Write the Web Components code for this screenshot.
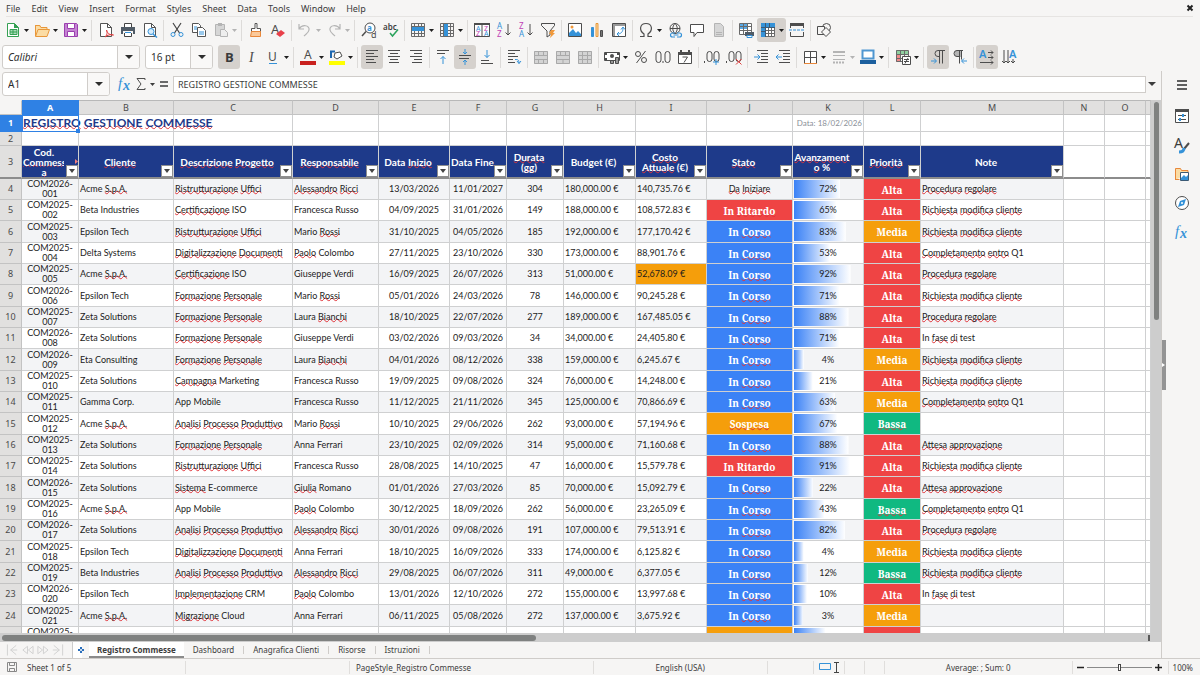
<!DOCTYPE html>
<html lang="it">
<head>
<meta charset="utf-8">
<title>Registro Commesse</title>
<style>
  html, body {
    margin: 0;
    height: 100%;
  }
  body {
    font-family: "Noto Sans", "Open Sans", sans-serif;
    font-size: 8px;
    color: #3c3c3c;
    background: #f6f5f4;
  }
</style>
</head>
<body>
<calc-window>
  <calc-menu slot="top"></calc-menu>
  <calc-toolbar slot="top" label="Standard" tools="new+ open+ save+ | pdf print preview | cut copy paste~ | brush clear | undo~ redo~ | find spell | row+ col+ | sort asc desc filter | image chart pivot | omega+ link comment header | area freeze*+ split | shapes"></calc-toolbar>
  <calc-toolbar slot="top" label="Formatting" tools="bold* italic under+ | fontcolor+ fill+ | left* center right | vtop vmid* vbot | wrap | merge1 merge2 merge3 | money+ percent number date | decadd decdel | indent outdent | borders+ style~ color+ | cond+ | ltr* rtl | horiz* vert">
    <calc-combo value="Calibri" label="Font name" style="width: 138px; font-style: italic"></calc-combo>
    <calc-combo value="16 pt" label="Font size" style="width: 68px"></calc-combo>
  </calc-toolbar>
  <formula-bar></formula-bar>
  <sheet-grid></sheet-grid>
  <sheet-tabs></sheet-tabs>
  <calc-sidebar slot="side"></calc-sidebar>
  <status-bar slot="bottom"></status-bar>
</calc-window>

<script>
// stroke helpers for the 16x16 icons
const p = (d, c = "#4d4d4d", w = 1, f = "none") => `<path d="${d}" fill="${f}" stroke="${c}" stroke-width="${w}"/>`;
const fillPath = (d, c) => `<path d="${d}" fill="${c}"/>`;
const t = (x, y, s, txt, c = "#4d4d4d", extra = "") => `<text x="${x}" y="${y}" font-size="${s}" fill="${c}" ${extra}>${txt}</text>`;
const BLUE = "#3592d8";
const GRAY = "#b4b4b4";
const hline = (a, b, y, c) => p(`M${a} ${y}H${b}`, c);
const table = (c = "#6a6a6a") => p("M1.5 1.5h13v13h-13zM1.5 4.5h13M1.5 8.5h13M1.5 11.5h13M4.5 1.5v13M8.5 1.5v13M11.5 1.5v13", c);
const mergeIcon = (d) => fillPath("M1 2h14v13H1z", "#d4d4d4") + p("M1.5 2.5h13v12h-13zM1.5 6.5h13M1.5 10.5h13" + d, "#a9a9a9");

const ICONS = {
  new: p("M2.5 1.5h7l4 4v9h-11z", "#35a053", 1, "#fff") + fillPath("M9 1v5h5z", "#35a053") + p("M5 7.5h7v5H5zM5 10h7M8 7.5v5", "#35a053", 1, "#a9dcb8"),
  open: fillPath("M1 3h5l1 2h6v2H5L2 14H1z", "#e59a3a") + p("M1.5 14V3.5h4l1.5 2h6V7M1.5 14.5L4 7.5h11.5l-2.5 7z", "#e8973a", 1, "#fbdca4"),
  save: p("M1.5 1.5h12l1 1v12h-13z", "#9b3fae", 1, "#c583d3") + p("M4.5 1.5h7v5h-7zM4.5 9.5h7v5h-7z", "#9b3fae", 1, "#fff"),
  pdf: p("M2.5 1.5h7l4 4v9h-11z", "#555", 1, "#fff") + p("M9.5 1.5v4h4") + p("M7 15c3-3 2-5 1.500-7 1 4 4 5 7 5-3-1-6 0-8.500 2z", "#e03e3e"),
  print: p("M4.500 5V1.500h7V5M4.500 11v3.500h7V11", "#444", 1, "#fff") + fillPath("M1 5h14v7h-2V9H3v3H1z", "#505b66") + fillPath("M5 10h6v1H5z", BLUE),
  preview: p("M2.5 1.5h7l4 4v9h-11z", "#555", 1, "#fff") + p("M9.5 1.5v4h4") + `<circle cx="9" cy="9.500" r="3" fill="#d6ebfa" stroke="${BLUE}"/>` + p("M11 12l4 3.500", BLUE, 1.500),
  cut: p("M4 1l6.500 10M12 1L5.500 11", "#444", 1.200) + `<circle cx="4" cy="12.500" r="2" fill="none" stroke="${BLUE}"/><circle cx="12" cy="12.500" r="2" fill="none" stroke="${BLUE}"/>`,
  copy: p("M1.500 1.500h6l2 2v7h-8z", "#555", 1, "#fff") + p("M6.500 5.500h5l3 3v6h-8z", "#555", 1, "#fff") + p("M8 10h5M8 12h5M3 5h3M3 7h3", BLUE),
  paste: p("M2.500 2.500h9v11h-9z", GRAY, 1, "#d6d6d6") + fillPath("M5 1h4v3H5z", GRAY) + p("M7.500 7.500h4l3 3v4h-7z", GRAY, 1, "#eee"),
  brush: p("M7 1.500h2v5h3.500v3h-9v-3H7z", "#555", 1, "#fff") + p("M3.500 9.500h9v5h-10z", "#e8873a", 1, "#fbc99a"),
  clear: t(1, 12, 13, "A", "#4d4d4d") + fillPath("M6 12l5-4 4 3-5 4z", "#e8404a"),
  undo: p("M2 2v5h5M2 7c3-5 11-4 10 1-.5 3-3 4-5 6", GRAY, 1.200),
  redo: p("M14 2v5H9M14 7C11 2 3 3 4 8c.500 3 3 4 5 6", GRAY, 1.200),
  find: `<circle cx="9" cy="6" r="5" fill="#fff" stroke="#4d4d4d"/>` + p("M5 9.500L1 14", "#4d4d4d", 1.500) + t(6, 9, 8, "a", BLUE, 'font-weight="bold"') + t(10, 16, 9, "d"),
  spell: t(0, 8, 8, "abc", "#3d3d3d", 'font-weight="600"') + p("M7 11l2.500 3L15 7.500", "#2ba35c", 1.500),
  row: table() + fillPath("M2 5h12v4H2z", BLUE),
  col: table() + fillPath("M5 2h4v12H5z", BLUE),
  sort: p("M.5 1.500h15v13H.5zM8 1.500v13", "#4d4d4d", 1, "#fff") + fillPath("M0 1h16v2H0z", "#4d4d4d") + t(2, 9, 7, "A", BLUE) + t(2, 14, 7, "Z", "#c03fb5") + t(10, 9, 7, "Z", "#c03fb5") + t(10, 14, 7, "A", BLUE),
  asc: t(1, 7, 8, "A", BLUE) + t(1, 15, 8, "Z", "#c03fb5") + p("M12 2v11M9.500 10.500L12 13l2.500-2.500"),
  desc: t(1, 7, 8, "Z", "#c03fb5") + t(1, 15, 8, "A", BLUE) + p("M12 2v11M9.500 10.500L12 13l2.500-2.500"),
  filter: p("M1.500 1.500h13v2L10 9v4l-3 2V9L1.500 3.500z") + fillPath("M11 8h4l-2 3h2l-5 5 1-4H9z", "#f0983a"),
  image: p("M1.500 1.500h13v13h-13z", "#4d4d4d", 1, "#fff") + fillPath("M2 14v-3l4-4 3 4 2-2 3 3v2z", BLUE) + `<circle cx="5" cy="5" r="1.500" fill="#f0983a"/>`,
  chart: p("M2.500 5.500h2v9h-2z", BLUE, 1, BLUE) + p("M7 1.500h2v13H7z", "#e8973a", 1, "#fbdca4") + p("M11.500 8.500h2v6h-2z", "#4d4d4d", 1, "#777"),
  pivot: p("M1.500 1.500h13v13h-13z", "#4d4d4d", 1, "#fff") + fillPath("M2 2h12v2H2zM2 2h2v12H2z", "#9a9a9a") + p("M6 12c4 0 6-2 6-6M10 7.500L12 5l2 2.500M8 10l-2 2 2 2", BLUE),
  omega: p("M2 14.500h4V12C.5 8 2 1.500 8 1.500S15.500 8 10 12v2.500h4", "#4d4d4d", 1.200),
  link: `<circle cx="8" cy="6.500" r="5" fill="none" stroke="#4d4d4d"/>` + p("M3 6.500h10M8 1.500c-3 3-3 7 0 10M8 1.500c3 3 3 7 0 10") + p("M8 11H5.500a1.500 1.500 0 0 0 0 4H8M10 11h2.500a1.500 1.500 0 0 1 0 4H10M6.500 13h5", BLUE, 1.200),
  comment: p("M1.500 2.500h13v8H8l-3 4v-4H1.500z", "#4d4d4d", 1, "#fff"),
  header: p("M3.500 1.500h6l3 3v10h-9z", GRAY, 1, "#d6d6d6") + p("M5 10.500h6M5 12.500h6", GRAY),
  area: p("M1.500 1.500h12v11h-12z", "#6a6a6a", 1, "#fff") + fillPath("M2 2h8v5H2z", "#5aa9e4") + p("M1.500 4.500h12M1.500 8.500h12M5.500 1.500v11M9.500 1.500v11", "#6a6a6a") + fillPath("M7 10h9v4H7z", "#505b66") + p("M9 13.500h5v2H9z", BLUE, 1, "#fff"),
  freeze: p("M1.500 1.500h13v13h-13z", "#6a6a6a", 1, "#fff") + p("M5 8.500h9M5 11.500h9M8.500 5v9M11.500 5v9", "#6a6a6a") + fillPath("M1 1h14v4H1zM1 1h4v14H1z", "#3592d8") + p("M5.500 1v14M1 5.500h14M9.500 1v4M1 9.500h4", "#3c5a75"),
  split: p("M1.500 6V2.500h13V6M1.500 10v4.500h13V10", "#4d4d4d", 1) + fillPath("M1 1h14v3H1z", "#4d4d4d") + `<path d="M0 8h16" stroke="${BLUE}" stroke-dasharray="3 1"/>`,
  shapes: `<circle cx="10.500" cy="5.500" r="4" fill="#f6f5f4" stroke="#4d4d4d"/>` + p("M1.500 4.500h7v8h-7z", "#4d4d4d", 1, "#f6f5f4") + p("M10 5.500l4.500 4.500-4.500 4.500L5.500 10z", "#4d4d4d", 1, "#f6f5f4"),

  bold: t(4, 13, 13, "B", "#3a3a3a", 'font-weight="bold" font-family="Open Sans"'),
  italic: t(6, 13, 14, "I", "#4d4d4d", 'font-style="italic" font-family="Liberation Serif"'),
  under: t(3, 12, 12, "U", "#4d4d4d") + hline(4, 12, 14.5, BLUE),
  fontcolor: t(4, 10, 12, "A") + fillPath("M0 12h16v4H0z", "#c9211e"),
  fill: p("M6 4l5-1 2 4-5 3-3-2z", "#4d4d4d", 1, "#fff") + p("M2 9V2.500h4", "#1d67b0", 2) + fillPath("M0 12h16v4H0z", "#ff0"),
  left: hline(2, 14, 1.5) + hline(2, 10, 4.5) + hline(2, 14, 7.5) + hline(2, 10, 10.5) + hline(2, 12, 13.5),
  center: hline(2, 14, 1.5) + hline(4, 12, 4.5) + hline(2, 14, 7.5) + hline(4, 12, 10.5) + hline(3, 13, 13.5),
  right: hline(2, 14, 1.5) + hline(6, 14, 4.5) + hline(2, 14, 7.5) + hline(6, 14, 10.5) + hline(4, 14, 13.5),
  vtop: hline(2, 14, 1.5) + hline(2, 10, 4.5) + p("M8 15V7.500M5.500 10L8 7.500l2.500 2.500", BLUE),
  vmid: hline(2, 14, 6.5) + hline(2, 12, 9.5) + p("M8 0v5M6 3l2 2 2-2M8 16v-5M6 13l2-2 2 2", BLUE),
  vbot: hline(2, 10, 11.5) + hline(2, 14, 14.5) + p("M8 1v7.500M5.500 6L8 8.500 10.500 6", BLUE),
  wrap: hline(2, 14, 1.5) + hline(2, 9, 4.5) + hline(2, 12, 7.5) + hline(2, 7, 10.5) + hline(2, 9, 13.5) + p("M9 10.500c3 0 4 0 4 4M11 12l2 2.500 2-2.500", BLUE),
  merge1: mergeIcon("M5.500 2v4M10.500 2v4M5.500 10v4M10.500 10v4"),
  merge2: mergeIcon("M5.500 2v4M10.500 2v4M8 10v4"),
  merge3: mergeIcon("M5.500 2v12M10.500 2v12"),
  money: p("M.5 3.500h15v8H.5z", "#4d4d4d", 1, "#fff") + fillPath("M1 4h2v2H1zM13 4h2v2h-2zM1 9h2v2H1z", "#4d4d4d") + `<circle cx="8" cy="7" r="2" fill="#4d4d4d"/>` + p("M6.500 11.500h3v3h-3zM11.500 8.500h3v6h-3z", "#4d4d4d", 1, "#999"),
  percent: `<circle cx="5" cy="5" r="2.500" fill="none" stroke="#4d4d4d"/><circle cx="11" cy="11" r="2.500" fill="none" stroke="#4d4d4d"/>` + p("M12.500 2L3.500 14"),
  number: `<rect x="1" y="2.500" width="5" height="11" rx="2.500" fill="none" stroke="#4d4d4d"/><rect x="10" y="2.500" width="5" height="11" rx="2.500" fill="none" stroke="#4d4d4d"/>` + fillPath("M7.500 12h1v2h-1z", "#4d4d4d"),
  date: p("M1.500 3.500h13v11h-13z", "#4d4d4d", 1, "#fff") + fillPath("M1 3h14v3H1zM3 1h2v3H3zM11 1h2v3h-2z", "#4d4d4d") + p("M5.500 8h5L7 13.500"),
  decadd: fillPath("M0 12h1v2H0z", "#4d4d4d") + `<rect x="3" y="2.500" width="5" height="10" rx="2.500" fill="none" stroke="#4d4d4d"/><rect x="10" y="2.500" width="5" height="10" rx="2.500" fill="none" stroke="#4d4d4d"/>` + p("M12 10v6M9 13h6", BLUE),
  decdel: fillPath("M0 12h1v2H0z", "#4d4d4d") + `<rect x="3" y="2.500" width="5" height="10" rx="2.500" fill="none" stroke="#4d4d4d"/><rect x="10" y="2.500" width="5" height="10" rx="2.500" fill="none" stroke="#4d4d4d"/>` + p("M10 10l5.500 5.500M15.500 10L10 15.500", "#e03e3e"),
  indent: hline(4, 15, 1.5) + hline(8, 15, 4.5) + hline(8, 15, 7.5) + hline(8, 15, 10.5) + hline(4, 15, 13.5) + p("M1 8h6M4.500 5.500L7 8l-2.500 2.500", BLUE),
  outdent: hline(4, 15, 1.5) + hline(8, 15, 4.5) + hline(8, 15, 7.5) + hline(8, 15, 10.5) + hline(4, 15, 13.5) + p("M7 8H1M3.500 5.500L1 8l2.500 2.500", BLUE),
  borders: p("M2.500 14V2.500h12V14M8.500 2.500V14M2.500 8.500h12", "#4d4d4d", 1, "#fff") + hline(2, 15, 14.5, "#e8873a"),
  style: p("M2 2.500h12M2 3.500h12M2 6.500h12M2 10.500h12", GRAY) + `<path d="M2 13.500h12" stroke="${GRAY}" stroke-dasharray="2 1" stroke-width="2"/>`,
  color: p("M2.500 1.500h11v8h-11z", "#4f97d1", 2, "#fff") + fillPath("M0 11h16v4H0z", "#1c5f9e"),
  cond: fillPath("M1 1h12v4H1z", "#8fd09f") + fillPath("M1 5h5v8H1z", "#f08a8a") + p("M1.500 1.500h12v11h-12zM1.500 5.500h12M1.500 9.500h12M5.500 1.500v11M9.500 1.500v11", "#6a6a6a") + p("M7.500 7.500h8v8h-8z", "#4d4d4d", 1, "#fff") + p("M9 10.500h5M9 12.500h5M13 9l-3 5.500"),
  ltr: p("M15 1.500H8a3 3 0 0 0 0 6h1M9.500 1.500v13M12.500 1.500v13") + p("M1 12h5M4 9.500L6.500 12 4 14.500", BLUE),
  rtl: fillPath("M6 1h4v7H6C1 8 1 1 6 1z", "#b4b4b4") + p("M11 1.500H5a3 3 0 0 0 0 6h2M7.500 1.500v13M9.500 1.500v9") + p("M15 12h-5M12 9.500L9.500 12l2.500 2.500", BLUE),
  horiz: t(0, 9, 11, "A", BLUE, 'font-weight="600"') + p("M9 3.500h5M12 1.500l2 2-2 2M9 8.500h5M12 6.500l2 2-2 2M1 13.500h13M12 11.500l2 2-2 2"),
  vert: t(8, 9, 11, "A", BLUE, 'font-weight="600"') + p("M3 1v13M1 12l2 2 2-2M7 1v13M5 12l2 2 2-2M12 10v4M10 12l2 2 2-2"),

  fx: t(1, 12, 15, "f", BLUE, 'font-style="italic" font-family="Liberation Serif"') + t(6, 14, 14, "x", BLUE, 'font-style="italic" font-weight="bold" font-family="Liberation Serif"'),
  sum: p("M12 4V2.500H4l4 5.500-4 5.500h8V12", "#4d4d4d", 1),
  equals: p("M4 6h8M4 10h8", "#3d3d3d", 1.5),
  menu: p("M3 4h10M3 8h10M3 12h10", "#2e2e2e", 1.500),
  props: p("M1.500 1.500h13v13h-13z", "#4d4d4d", 1, "#fff") + fillPath("M1 1h14v3H1z", "#4d4d4d") + p("M4 7.500h8M4 11.500h8", "#4d4d4d") + p("M9 6v3M6 10v3", BLUE, 2),
  styles: t(0, 11, 14, "A", "#3d3d3d") + p("M15 6l-5 6", "#4d4d4d", 2) + p("M5 15c3 0 5-1 5-4", BLUE, 3),
  gallery: p("M1.500 14V2.500h5l1 2h6.500V7M1.500 13.500h4", "#e8873a", 1, "#fbdca4") + p("M6.500 6.500h8v8h-8z", "#3c5a75", 1, "#fff") + fillPath("M7 14v-2l3-3 2 2 2-2v5z", BLUE),
  navigator: `<circle cx="8" cy="8" r="6.500" fill="#fff" stroke="#4d4d4d"/>` + fillPath("M12 4L10 10l-6 2 2-6z", BLUE) + `<circle cx="8" cy="8" r="1" fill="#fff"/>`
};

const icon = (name, size = 16) => `<svg width="${size}" height="${size}" viewBox="0 0 16 16" aria-hidden="true">${ICONS[name]}</svg>`;
const ARROW = `<svg width="5" height="3" viewBox="0 0 5 3" aria-hidden="true"><path d="M0 0h5L2.500 3z" fill="currentColor"/></svg>`;
const BIG_ARROW = `<svg width="8" height="4" viewBox="0 0 8 4" aria-hidden="true"><path d="M0 0h8L4 4z" fill="currentColor"/></svg>`;

const RESET = `
  button {
    font: inherit;
    color: inherit;
    background: none;
    border: 0;
    padding: 0;
    margin: 0;
  }
  svg {
    display: block;
    overflow: visible;
  }
`;

class CalcWindow extends HTMLElement {
  constructor() {
    super();
    this.attachShadow({ mode: "open" });
    this.shadowRoot.innerHTML = `
      <style>
        :host {
          display: flex;
          flex-direction: column;
          height: 100vh;
          overflow: hidden;
        }
        .main {
          flex: 1;
          min-height: 0;
          display: flex;
        }
        .work {
          flex: 1;
          min-width: 0;
          display: flex;
          flex-direction: column;
        }
      </style>
      <slot name="top"></slot>
      <div class="main">
        <div class="work"><slot></slot></div>
        <slot name="side"></slot>
      </div>
      <slot name="bottom"></slot>
    `;
  }
}

class CalcMenu extends HTMLElement {
  constructor() {
    super();
    this.attachShadow({ mode: "open" });
    const items = ["File", "Edit", "View", "Insert", "Format", "Styles", "Sheet", "Data", "Tools", "Window", "Help"];
    this.shadowRoot.innerHTML = `
      <style>
        ${RESET}
        :host {
          display: block;
          font-size: 9px;
          padding: 0 7px 0 6px;
        }
        nav {
          display: flex;
          align-items: center;
          gap: 11px;
          height: 16px;
          border-bottom: 1px solid #e6e4e2;
        }
        .close {
          margin-left: auto;
        }
      </style>
      <nav>
        ${items.map((i) => `<button>${i}</button>`).join("")}
        <button class="close" aria-label="Close document">
          <svg width="6" height="6" viewBox="0 0 6 6"><path d="M.5 .5l5 5M5.500 .5l-5 5" stroke="#222" stroke-width="2"/></svg>
        </button>
      </nav>
    `;
  }
}

class CalcToolbar extends HTMLElement {
  constructor() {
    super();
    this.attachShadow({ mode: "open" });
  }

  // suffixes: "+" has a menu, "~" has a menu but is disabled, "*" is pressed
  connectedCallback() {
    const tools = this.getAttribute("tools").split(" ").map((tool) => {
      if (tool === "|") return `<span class="sep"></span>`;
      const name = tool.replace(/[+~*]/g, "");
      const menu = /[+~]/.test(tool);
      const off = tool.includes("~");
      const on = tool.includes("*");
      return `<span class="tool ${menu ? "drop" : ""} ${on ? "on" : ""} ${off ? "off" : ""}">
        <button aria-label="${name}" ${on ? 'aria-pressed="true"' : ""} ${off ? "disabled" : ""}>${icon(name)}</button>
        ${menu ? `<button class="more" aria-label="${name} options" ${off ? "disabled" : ""}>${ARROW}</button>` : ""}
      </span>`;
    });
    this.shadowRoot.innerHTML = `
      <style>
        ${RESET}
        :host {
          display: flex;
          align-items: center;
          height: 26px;
          padding: 0 0 1px 2px;
        }
        .tool {
          display: flex;
          height: 24px;
          border-radius: 3px;
        }
        .tool button {
          width: 22px;
          display: flex;
          align-items: center;
          justify-content: center;
        }
        .tool .more {
          width: 7px;
          color: #1e1e1e;
          justify-content: flex-start;
        }
        .off .more {
          color: #b4b4b4;
        }
        .on {
          background: #d5d1cd;
        }
        .sep {
          width: 5px;
          height: 21px;
          background: linear-gradient(#dddbd9, #dddbd9) 2px 0 / 1px 100% no-repeat;
        }
        .drop + .sep {
          width: 6px;
        }
        ::slotted(*) {
          margin-right: 5px;
        }
      </style>
      <slot></slot>
      ${tools.join("")}
    `;
    this.setAttribute("role", "toolbar");
    this.setAttribute("aria-label", this.getAttribute("label"));
  }
}

class CalcCombo extends HTMLElement {
  constructor() {
    super();
    this.attachShadow({ mode: "open" });
  }

  connectedCallback() {
    this.shadowRoot.innerHTML = `
      <style>
        ${RESET}
        :host {
          display: grid;
          grid-template-columns: 1fr 22px;
          box-sizing: border-box;
          height: 24px;
          border: 1px solid #d0cdca;
          border-radius: 3px;
          background: #fff;
          overflow: hidden;
          font-size: 10px;
          color: #2e2e2e;
        }
        select {
          grid-area: 1 / 1 / 2 / 3;
          appearance: none;
          font: inherit;
          color: inherit;
          border: 0;
          background: none;
          padding: 0 0 0 5px;
          margin: 0;
        }
        span {
          grid-area: 1 / 2;
          display: flex;
          align-items: center;
          justify-content: center;
          pointer-events: none;
          background: #f9f8f7;
          border-left: 1px solid #d0cdca;
        }
      </style>
      <select aria-label="${this.getAttribute("label")}"><option>${this.getAttribute("value")}</option></select>
      <span>${BIG_ARROW}</span>
    `;
  }
}

class FormulaBar extends HTMLElement {
  constructor() {
    super();
    this.attachShadow({ mode: "open" });
    this.shadowRoot.innerHTML = `
      <style>
        ${RESET}
        :host {
          display: flex;
          align-items: center;
          height: 27px;
          padding: 0 5px 3px 2px;
          box-sizing: border-box;
          min-height: 29px;
        }
        calc-combo {
          width: 108px;
          margin-right: 7px;
        }
        button {
          display: flex;
          align-items: center;
        }
        .arrow {
          margin: 0 1px 0 1px;
        }
        input {
          flex: 1;
          min-width: 0;
          box-sizing: border-box;
          height: 17px;
          margin: 0 2px 0 1px;
          padding: 0 4px;
          border: 1px solid #d0cdca;
          background: #fff;
          font: inherit;
          font-size: 9px;
          color: #3c3c3c;
        }
      </style>
      <calc-combo value="A1" label="Name box"></calc-combo>
      <button aria-label="Function wizard">${icon("fx")}</button>
      <button aria-label="Select function">${icon("sum")}</button>
      <button class="arrow" aria-label="Function list">${ARROW}</button>
      <button aria-label="Formula">${icon("equals")}</button>
      <input aria-label="Input line" value="REGISTRO GESTIONE COMMESSE">
      <button aria-label="Expand formula bar">${BIG_ARROW}</button>
    `;
  }
}

const COLS = [57, 95, 119, 86, 71, 57, 57, 72, 71, 86, 71, 57, 143, 41, 41];
const HEADS = ["Cod.<i class='cut'>Commess</i>a", "Cliente", "Descrizione Progetto", "Responsabile", "Data Inizio", "Data Fine", "Durata<br>(gg)", "Budget (€)", "Costo<br>Attuale (€)", "Stato", "Avanzament<br>o %", "Priorità", "Note"];

const RF = "Richiesta modifica cliente", PR = "Procedura regolare", CE = "Completamento entro Q1", AA = "Attesa approvazione";
const ROWS = [
  ["2026-001", "Acme S.p.A.", "Ristrutturazione Uffici", "Alessandro Ricci", "13/03/2026", "11/01/2027", 304, "180,000.00", "140,735.76", "Da Iniziare", 72, "Alta", PR],
  ["2025-002", "Beta Industries", "Certificazione ISO", "Francesca Russo", "04/09/2025", "31/01/2026", 149, "188,000.00", "108,572.83", "In Ritardo", 65, "Alta", RF],
  ["2025-003", "Epsilon Tech", "Ristrutturazione Uffici", "Mario Rossi", "31/10/2025", "04/05/2026", 185, "192,000.00", "177,170.42", "In Corso", 83, "Media", RF],
  ["2025-004", "Delta Systems", "Digitalizzazione Documenti", "Paolo Colombo", "27/11/2025", "23/10/2026", 330, "173,000.00", "88,901.76", "In Corso", 53, "Alta", CE],
  ["2025-005", "Acme S.p.A.", "Certificazione ISO", "Giuseppe Verdi", "16/09/2025", "26/07/2026", 313, "51,000.00", "52,678.09", "In Corso", 92, "Alta", PR],
  ["2026-006", "Epsilon Tech", "Formazione Personale", "Mario Rossi", "05/01/2026", "24/03/2026", 78, "146,000.00", "90,245.28", "In Corso", 71, "Alta", RF],
  ["2025-007", "Zeta Solutions", "Formazione Personale", "Laura Bianchi", "18/10/2025", "22/07/2026", 277, "189,000.00", "167,485.05", "In Corso", 88, "Alta", PR],
  ["2026-008", "Zeta Solutions", "Formazione Personale", "Giuseppe Verdi", "03/02/2026", "09/03/2026", 34, "34,000.00", "24,405.80", "In Corso", 71, "Alta", "In fase di test"],
  ["2026-009", "Eta Consulting", "Formazione Personale", "Laura Bianchi", "04/01/2026", "08/12/2026", 338, "159,000.00", "6,245.67", "In Corso", 4, "Media", RF],
  ["2025-010", "Zeta Solutions", "Campagna Marketing", "Francesca Russo", "19/09/2025", "09/08/2026", 324, "76,000.00", "14,248.00", "In Corso", 21, "Alta", RF],
  ["2025-011", "Gamma Corp.", "App Mobile", "Francesca Russo", "11/12/2025", "21/11/2026", 345, "125,000.00", "70,866.69", "In Corso", 63, "Media", CE],
  ["2025-012", "Acme S.p.A.", "Analisi Processo Produttivo", "Mario Rossi", "10/10/2025", "29/06/2026", 262, "93,000.00", "57,194.96", "Sospesa", 67, "Bassa", ""],
  ["2025-013", "Zeta Solutions", "Formazione Personale", "Anna Ferrari", "23/10/2025", "02/09/2026", 314, "95,000.00", "71,160.68", "In Corso", 88, "Alta", AA],
  ["2025-014", "Zeta Solutions", "Ristrutturazione Uffici", "Francesca Russo", "28/08/2025", "14/10/2025", 47, "16,000.00", "15,579.78", "In Ritardo", 91, "Alta", RF],
  ["2026-015", "Zeta Solutions", "Sistema E-commerce", "Giulia Romano", "01/01/2026", "27/03/2026", 85, "70,000.00", "15,092.79", "In Corso", 22, "Alta", AA],
  ["2025-016", "Acme S.p.A.", "App Mobile", "Paolo Colombo", "30/12/2025", "18/09/2026", 262, "56,000.00", "23,265.09", "In Corso", 43, "Bassa", CE],
  ["2026-017", "Zeta Solutions", "Analisi Processo Produttivo", "Alessandro Ricci", "30/01/2026", "09/08/2026", 191, "107,000.00", "79,513.91", "In Corso", 82, "Alta", PR],
  ["2025-018", "Epsilon Tech", "Digitalizzazione Documenti", "Anna Ferrari", "18/10/2025", "16/09/2026", 333, "174,000.00", "6,125.82", "In Corso", 4, "Media", RF],
  ["2025-019", "Beta Industries", "Analisi Processo Produttivo", "Alessandro Ricci", "29/08/2025", "06/07/2026", 311, "49,000.00", "6,377.05", "In Corso", 12, "Bassa", RF],
  ["2026-020", "Epsilon Tech", "Implementazione CRM", "Paolo Colombo", "13/01/2026", "12/10/2026", 272, "155,000.00", "13,997.68", "In Corso", 10, "Alta", "In fase di test"],
  ["2025-021", "Acme S.p.A.", "Migrazione Cloud", "Anna Ferrari", "06/11/2025", "05/08/2026", 272, "137,000.00", "3,675.92", "In Corso", 3, "Media", ""]
];

// words that the English spell checker does not know
const UNKNOWN = /(REGISTRO|GESTIONE|COMMESSE|S\.p\.A\.|Ristrutturazione|Uffici|Certificazione|Digitalizzazione|Documenti|Formazione|Personale|Campagna|Analisi|Processo|Produttivo|Sistema|Implementazione|Migrazione|Alessandro|Ricci|Rossi|Paolo|Bianchi|Giulia|Da(?= )|Iniziare|Ritardo|Corso|Sospesa|Bassa|Procedura|regolare|Richiesta|modifica|Completamento|entro|Attesa|approvazione|fase|di(?= test)|cliente|Cliente|Descrizione|Progetto|Responsabile|Inizio|Durata|gg|Costo|Attuale|Stato|Avanzament|\bo(?= %)|Priorità|Commess|^a$)/g;
const spell = (text) => text.replace(UNKNOWN, "<u>$1</u>");
// the same, leaving the markup between the words alone
const spellMarkup = (html) => html.split(/(<[^>]+>)/).map((s) => (s[0] === "<" ? s : spell(s))).join("");

const FILTER = `<button class="filter" aria-label="Filter"><svg width="6" height="4" viewBox="0 0 6 4"><path d="M0 0h6L3 4z" fill="#444"/></svg></button>`;
const MORE = `<svg class="more-text" width="3" height="5" viewBox="0 0 3 5"><path d="M0 0l3 2.500L0 5z" fill="#f08080"/></svg>`;

class SheetGrid extends HTMLElement {
  constructor() {
    super();
    this.attachShadow({ mode: "open" });
    const blanks = (n) => "<td></td>".repeat(n);
    const letters = "ABCDEFGHIJKLMNO".split("");

    const row = (r, i) => `
      <tr>
        <th scope="row">${i + 4}</th>
        <td class="code">COM${r[0].replace("-", "-<br>")}</td>
        <td>${spell(r[1])}</td>
        <td>${spell(r[2])}</td>
        <td>${spell(r[3])}</td>
        <td class="mid">${r[4]}</td>
        <td class="mid">${r[5]}</td>
        <td class="mid">${r[6]}</td>
        <td>${r[7]} €</td>
        <td class="${r[8] === "52,678.09" ? "over" : ""}">${r[8]} €</td>
        <td class="mid ${r[9].replace(" ", "-")}">${spell(r[9])}</td>
        <td class="mid bar" style="--v: ${r[10]}">${r[10]}%</td>
        <td class="mid ${r[11]}">${spell(r[11])}</td>
        <td>${spell(r[12])}</td>
        ${blanks(3)}
      </tr>`;

    this.shadowRoot.innerHTML = `
      <style>
        ${RESET}
        :host {
          flex: 1;
          min-height: 0;
          display: grid;
          grid-template: minmax(0, 1fr) 9px / minmax(0, 1fr) 10px;
          background: #cdcdcd;
        }
        .sheet {
          overflow: hidden;
          background: #fff;
        }
        table {
          table-layout: fixed;
          width: 100%;
          border-collapse: separate;
          border-spacing: 0;
          font-family: Lato, sans-serif;
          font-size: 9px;
          line-height: 10px;
          color: #1c1c1c;
        }
        th, td {
          box-sizing: border-box;
          padding: 0 1px;
          border: solid #cfd0d1;
          border-width: 0 1px 1px 0;
          font-weight: normal;
          white-space: nowrap;
          overflow: hidden;
        }
        thead th, th[scope="row"] {
          background: #e1e0df;
          border-color: #c3c3c3;
          color: #4a4a4a;
          font-family: "Noto Sans", sans-serif;
          font-size: 9px;
          text-align: center;
        }
        thead th {
          border-top: 1px solid #b8b8b8;
        }
        thead th:first-child {
          background: #f6f5f4;
          border-color: #f6f5f4 #c3c3c3 #c3c3c3 #f6f5f4;
        }
        thead .sel, th[scope="row"].sel {
          background: #2f81e4;
          border-color: #2f81e4;
          color: #fff;
          font-weight: bold;
        }
        u {
          text-decoration: underline wavy #e0343a 1px;
          text-decoration-skip-ink: none;
          text-underline-offset: -2px;
        }
        .title td {
          overflow: visible;
        }
        .title .a1 {
          position: relative;
          padding-bottom: 1px;
          font-size: 12px;
          line-height: 14px;
          font-weight: bold;
          color: #1e3a8a;
          outline: 1px solid #2f81e4;
          outline-offset: -1px;
        }
        .title .a1::after {
          content: "";
          position: absolute;
          right: -2px;
          bottom: -2px;
          width: 4px;
          height: 4px;
          background: #2f81e4;
        }
        .title .date {
          font-size: 8px;
          color: #8a8f98;
          text-align: right;
        }
        .heads td {
          position: relative;
          background: #1e3a8a;
          border-bottom: 2px solid #8c8c8c;
          padding: 0 13px 0 1px;
          color: #fff;
          font-size: 10px;
          line-height: 10px;
          font-weight: bold;
          text-align: center;
        }
        .heads td.none {
          background: #fff;
        }
        .heads th {
          border-bottom: 2px solid #8c8c8c;
        }
        .cut {
          display: block;
          font-style: normal;
          width: 41px;
          overflow: hidden;
        }
        .more-text {
          position: absolute;
          right: 0;
          top: 13px;
        }
        .filter {
          position: absolute;
          right: 0;
          bottom: 0;
          width: 12px;
          height: 12px;
          display: flex;
          align-items: center;
          justify-content: center;
          background: #fff;
          border: 1px solid #8f8f8f;
        }
        .rows tr {
          height: 21px;
        }
        .rows tr:nth-child(3n) {
          height: 22px;
        }
        .rows tr:nth-child(odd) td {
          background-color: #f3f4f6;
        }
        .rows tr td:nth-last-child(-n + 3) {
          background-color: #fff;
        }
        .code, .mid {
          text-align: center;
        }
        .rows tr td.bar {
          background-image: linear-gradient(90deg, #3b82f6, #fff);
          background-position: 1px 1px;
          background-size: calc(11% + var(--v) * 0.76%) calc(100% - 2px);
          background-repeat: no-repeat;
        }
        .In-Corso, .In-Ritardo, .Sospesa, .Alta, .Media, .Bassa {
          padding-top: 1px;
          color: #fff;
          font: bold 10px "Noto Serif", "Liberation Serif", serif;
          line-height: 10px;
        }
        .rows tr:nth-child(n) td.In-Corso { background-color: #3b82f6; }
        .rows tr:nth-child(n) td.In-Ritardo, .rows tr:nth-child(n) td.Alta { background-color: #ef4444; }
        .rows tr:nth-child(n) td.Sospesa, .rows tr:nth-child(n) td.Media, .rows tr:nth-child(n) td.over { background-color: #f59e0b; }
        .rows tr:nth-child(n) td.Bassa { background-color: #10b981; }
        .v, .h {
          display: flex;
        }
        .v {
          padding: 2px 2px 0 3px;
        }
        .h {
          padding: 2px 1px 1px 2px;
        }
        .v i, .h i {
          background: #7f8180;
          border-radius: 3px;
        }
        .v i {
          width: 6px;
          height: 41%;
        }
        .h i {
          width: 534px;
          max-width: 47%;
        }
        .h b {
          width: 2px;
          margin-left: auto;
          background: #5a5a5a;
        }
      </style>
      <div class="sheet">
        <table>
          <colgroup><col style="width: 22px">${COLS.map((w) => `<col style="width: ${w}px">`).join("")}<col></colgroup>
          <thead>
            <tr style="height: 15px"><th></th>${letters.map((l, i) => `<th scope="col" class="${i ? "" : "sel"}">${l}</th>`).join("")}<th></th></tr>
          </thead>
          <tbody>
            <tr class="title" style="height: 17px"><th scope="row" class="sel">1</th><td class="a1">${spell("REGISTRO GESTIONE COMMESSE")}</td>${blanks(9)}<td class="date">Data: 18/02/2026</td>${blanks(5)}</tr>
            <tr style="height: 14px"><th scope="row">2</th>${blanks(16)}</tr>
            <tr class="heads" style="height: 33px"><th scope="row">3</th>
              ${HEADS.map((h, i) => `<td>${spellMarkup(h)}${i ? "" : MORE}${FILTER}</td>`).join("")}
              <td class="none"></td><td class="none"></td><td class="none"></td>
            </tr>
          </tbody>
          <tbody class="rows">
            ${ROWS.map(row).join("")}
            <tr><th scope="row"></th><td class="code">COM2025-<br>022</td>${blanks(8)}<td class="Sospesa"></td><td class="bar" style="--v: 45"></td><td class="Alta"></td>${blanks(4)}</tr>
          </tbody>
        </table>
      </div>
      <div class="v"><i></i></div>
      <div class="h"><i></i><b></b></div>
    `;
  }
}

class SheetTabs extends HTMLElement {
  constructor() {
    super();
    this.attachShadow({ mode: "open" });
    const tabs = ["Registro Commesse", "Dashboard", "Anagrafica Clienti", "Risorse", "Istruzioni"];
    const nav = [
      ["First sheet", "M1.500 1v12M11 2L5 7l6 5M12 7H5"],
      ["Previous sheet", "M7 3L2 7l5 4zM13 3L8 7l5 4z"],
      ["Next sheet", "M2 3l5 4-5 4zM8 3l5 4-5 4z"],
      ["Last sheet", "M12.500 1v12M3 2l6 5-6 5M2 7h7"]
    ];
    this.shadowRoot.innerHTML = `
      <style>
        ${RESET}
        :host {
          display: flex;
          height: 16px;
          padding-left: 6px;
          border-bottom: 1px solid #cfccc9;
        }
        .nav {
          display: flex;
          align-items: center;
          gap: 2px;
          margin-right: 8px;
        }
        .add {
          width: 17px;
          display: flex;
          align-items: center;
          justify-content: center;
          background: linear-gradient(90deg, #ccc 1px, #fff 1px 60%, #f6f5f4 60%);
        }
        .tab {
          padding: 0 10px 1px 9px;
          background: linear-gradient(#cfccc9, #cfccc9) right / 1px 8px no-repeat;
        }
        .tab.on {
          background: #fff;
          padding: 1px 8px 0;
          font-weight: bold;
          border-bottom: 2px solid #8b8b8b;
        }
      </style>
      <div class="nav">
        ${nav.map(([label, d]) => `<button aria-label="${label}" disabled><svg width="13" height="14" viewBox="0 0 14 14"><path d="${d}" fill="none" stroke="#cfcfcf"/></svg></button>`).join("")}
      </div>
      <button class="add" aria-label="Add sheet"><svg width="6" height="6" viewBox="0 0 6 6"><path d="M3 0v6M0 3h6" stroke="#2a6ebb" stroke-width="2"/><path d="M3 2v2M2 3h2" stroke="#fff"/></svg></button>
      ${tabs.map((tab, i) => `<button class="tab ${i ? "" : "on"}">${tab}</button>`).join("")}
    `;
  }
}

class CalcSidebar extends HTMLElement {
  constructor() {
    super();
    this.attachShadow({ mode: "open" });
    this.shadowRoot.innerHTML = `
      <style>
        ${RESET}
        :host {
          display: flex;
          width: 39px;
          border-left: 1px solid #cfccc9;
          border-bottom: 1px solid #cfccc9;
          box-sizing: border-box;
        }
        .handle {
          align-self: center;
          width: 4px;
          height: 50px;
          display: flex;
          align-items: center;
          background: #949494;
        }
        nav {
          flex: 1;
          display: flex;
          flex-direction: column;
          align-items: center;
          gap: 13px;
          padding: 6px 3px 0 0;
        }
        nav button:first-child {
          margin-bottom: 2px;
        }
      </style>
      <button class="handle" aria-label="Hide sidebar"><svg width="3" height="4" viewBox="0 0 3 4"><path d="M0 0l3 2-3 2z" fill="#fff"/></svg></button>
      <nav>
        ${["menu", "props", "styles", "gallery", "navigator", "fx"].map((n) => `<button aria-label="${n}">${icon(n)}</button>`).join("")}
      </nav>
    `;
  }
}

class StatusBar extends HTMLElement {
  constructor() {
    super();
    this.attachShadow({ mode: "open" });
    this.shadowRoot.innerHTML = `
      <style>
        ${RESET}
        :host {
          display: flex;
          align-items: center;
          height: 16px;
          padding: 0 7px 0 6px;
        }
        div {
          box-sizing: border-box;
          height: 13px;
          display: flex;
          align-items: center;
          justify-content: center;
          border-right: 1px solid #e0dedc;
        }
        .sheet {
          width: 180px;
          justify-content: flex-start;
          gap: 9px;
        }
        .doc { width: 164px; }
        .style {
          flex: 240;
          justify-content: flex-start;
          padding-left: 6px;
        }
        .lang { flex: 175; }
        .blank { width: 46px; }
        .mode { width: 31px; gap: 3px; }
        .small { width: 20px; }
        .sum { flex: 190; }
        .zoom { width: 96px; gap: 3px; padding-right: 2px; }
        .level { width: 24px; border: 0; justify-content: flex-end; }
        input {
          appearance: none;
          width: 65px;
          height: 8px;
          margin: 0;
          background: linear-gradient(#8a8a8a, #8a8a8a) center / 100% 1px no-repeat;
        }
        input::-webkit-slider-thumb {
          appearance: none;
          box-sizing: border-box;
          width: 3px;
          height: 7px;
          border: 1px solid #444;
          background: #fff;
        }
      </style>
      <div class="sheet"><svg width="12" height="12" viewBox="0 0 12 12"><path d="M1.500 1.500h9v9h-9zM3.500 1.500v3h5v-3M3.500 10.500v-3h5v3" fill="none" stroke="#888"/></svg><span>Sheet 1 of 5</span></div>
      <div class="doc"></div>
      <div class="style">PageStyle_Registro Commesse</div>
      <div class="lang">English (USA)</div>
      <div class="blank"></div>
      <div class="mode">
        <svg width="12" height="8" viewBox="0 0 12 8"><path d="M.5 .5h11v6H.5z" fill="none" stroke="#3592d8"/></svg>
        <svg width="5" height="11" viewBox="0 0 5 11"><path d="M0 .5h5M0 10.500h5M2.500 0v11" stroke="#444"/></svg>
      </div>
      <div class="small"></div>
      <div class="small"></div>
      <div class="sum">Average: ; Sum: 0</div>
      <div class="zoom">
        <button aria-label="Zoom out"><svg width="7" height="7" viewBox="0 0 7 7"><path d="M0 3.500h7" stroke="#222" stroke-width="1.500"/></svg></button>
        <input type="range" aria-label="Zoom" value="50">
        <button aria-label="Zoom in"><svg width="7" height="7" viewBox="0 0 7 7"><path d="M0 3.500h7M3.500 0v7" stroke="#222" stroke-width="1.500"/></svg></button>
      </div>
      <div class="level">100%</div>
    `;
  }
}

customElements.define("calc-window", CalcWindow);
customElements.define("calc-menu", CalcMenu);
customElements.define("calc-toolbar", CalcToolbar);
customElements.define("calc-combo", CalcCombo);
customElements.define("formula-bar", FormulaBar);
customElements.define("sheet-grid", SheetGrid);
customElements.define("sheet-tabs", SheetTabs);
customElements.define("calc-sidebar", CalcSidebar);
customElements.define("status-bar", StatusBar);
</script>
</body>
</html>
